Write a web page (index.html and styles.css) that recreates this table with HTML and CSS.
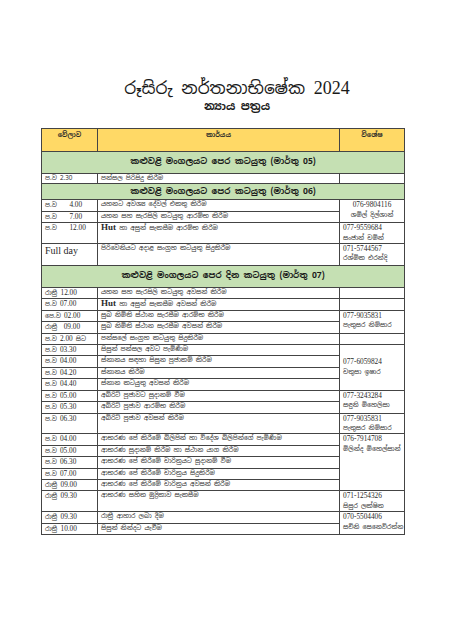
FILE: index.html
```html
<!DOCTYPE html>
<html lang="si">
<head>
<meta charset="utf-8">
<title>රූසිරු නර්තනාභිෂේක 2024</title>
<link rel="stylesheet" href="styles.css">
</head>
<body>
<div class="page">
  <h1 class="title">රූසිරු නර්තනාභිෂේක <span class="num">2024</span></h1>
  <h2 class="subtitle">න්‍යාය පත්‍රය</h2>
  <table class="agenda">
    <colgroup><col class="c1"><col class="c2"><col class="c3"></colgroup>
    <thead>
      <tr class="head"><th>වේලාව</th><th>කාර්යය</th><th>විශේෂ</th></tr>
    </thead>
    <tbody>
      <tr class="sec tall"><td colspan="3">කළුවළි මංගලයට පෙර කටයුතු (මාර්තු 05)</td></tr>
      <tr><td>ප.ව 2.30</td><td>පන්සල පිරිසිදු කිරීම</td><td></td></tr>
      <tr class="sec short"><td colspan="3">කළුවළි මංගලයට පෙර කටයුතු (මාර්තු 06)</td></tr>
      <tr><td class="pre">ප.ව    <span class="num">4.00</span></td><td>යහනට අවශ්‍ය දේවල් එකතු කිරීම</td><td rowspan="2" class="center"><span class="num">076-9804116</span><br>ශමිල් දිල්ශාන්</td></tr>
      <tr><td class="pre">ප.ව    <span class="num">7.00</span></td><td>යහන සහ සැරසිලි කටයුතු ආරම්භ කිරීම</td></tr>
      <tr class="two"><td class="pre">ප.ව    <span class="num">12.00</span></td><td><span class="big">Hut</span> හා අසුන් සැකසීම ආරම්භ කිරීම</td><td><span class="num">077-9559684</span><br>සංජාන් චමින්</td></tr>
      <tr class="two fd"><td><span class="fullday">Full day</span></td><td>පිරිවෙනියට අදාළ සංග්‍රහ කටයුතු සිදුකිරීම</td><td><span class="num">071-5744567</span><br>රශ්මික එරන්දි</td></tr>
      <tr class="sec tall"><td colspan="3">කළුවළි මංගලයට පෙර දින කටයුතු (මාර්තු 07)</td></tr>
      <tr><td>රාත්‍රී <span class="num">12.00</span></td><td>යහන සහ සැරසිලි කටයුතු අවසන් කිරීම</td><td></td></tr>
      <tr><td>ප.ව <span class="num">07.00</span></td><td><span class="big">Hut</span> හා අසුන් සැකසීම අවසන් කිරීම</td><td></td></tr>
      <tr><td>පෙ.ව <span class="num">02.00</span></td><td>සුබ නිමිති ස්ථාන සැරසීම ආරම්භ කිරීම</td><td rowspan="2"><span class="num">077-9035831</span><br>පැතුසර නිම්සාර</td></tr>
      <tr><td class="pre">රාත්‍රී  <span class="num">09.00</span></td><td>සුබ නිමිති ස්ථාන සැරසීම අවසන් කිරීම</td></tr>
      <tr><td>ප.ව <span class="num">2.00</span> සිට</td><td>පන්සලේ සංග්‍රහ කටයුතු සිදුකිරීම</td><td></td></tr>
      <tr><td>ප.ව <span class="num">03.30</span></td><td>සිසුන් පන්සල අවට පැමිණීම</td><td rowspan="4" class="mid"><span class="num">077-6059824</span><br>චතුසා ඉෂාර</td></tr>
      <tr><td>ප.ව <span class="num">04.00</span></td><td>ස්නානය සඳහා සිසුන පූජාකම් කිරීම</td></tr>
      <tr><td>ප.ව <span class="num">04.20</span></td><td>ස්නානය කිරීම</td></tr>
      <tr><td>ප.ව <span class="num">04.40</span></td><td>ස්නාන කටයුතු අවසන් කිරීම</td></tr>
      <tr><td>ප.ව <span class="num">05.00</span></td><td>අබිරිට් පූජාවට සූදානම් වීම</td><td rowspan="2"><span class="num">077-3243284</span><br>සඳුනි මිහෙලිසා</td></tr>
      <tr><td>ප.ව <span class="num">05.30</span></td><td>අබිරිට් පූජාව ආරම්භ කිරීම</td></tr>
      <tr class="two"><td>ප.ව <span class="num">06.30</span></td><td>අබිරිට් පූජාව අවසන් කිරීම</td><td><span class="num">077-9035831</span><br>පැතුසර නිම්සාර</td></tr>
      <tr class="thick"><td>ප.ව <span class="num">04.00</span></td><td>ආභරණ පේ කිරීමේ බිලිපින් හා විදේශ බිලිපින්ගේ පැමිණීම</td><td rowspan="5"><span class="num">076-7914708</span><br>මිලින්ද මිහෙල්සාන්</td></tr>
      <tr><td>ප.ව <span class="num">05.00</span></td><td>ආභරණ සූදානම් කිරීම හා ස්ථාන යාග කිරීම</td></tr>
      <tr><td>ප.ව <span class="num">06.30</span></td><td>ආභරණ පේ කිරීමේ චාරිත්‍රයට සූදානම් වීම</td></tr>
      <tr><td>ප.ව <span class="num">07.00</span></td><td>ආභරණ පේ කිරීමේ චාරිත්‍රය සිදුකිරීම</td></tr>
      <tr><td>රාත්‍රී <span class="num">09.00</span></td><td>ආභරණ පේ කිරීමේ චාරිත්‍රය අවසන් කිරීම</td></tr>
      <tr class="two"><td>රාත්‍රී <span class="num">09.30</span></td><td>ආභරණ සහිත මුද්‍රිකාව සැකසීම</td><td><span class="num">071-1254326</span><br>සිසුර ලක්ෂිත</td></tr>
      <tr><td>රාත්‍රී <span class="num">09.30</span></td><td>රාත්‍රී ආහාර ලබා දීම</td><td rowspan="2"><span class="num">070-5504406</span><br>සචිනි සෙනෙවිරත්න</td></tr>
      <tr><td>රාත්‍රී <span class="num">10.00</span></td><td>සිසුන් නින්දට යැවීම</td></tr>
    </tbody>
  </table>
</div>
</body>
</html>
```
FILE: styles.css
```css
html, body {
  margin: 0;
  padding: 0;
  background: #ffffff;
}
.page {
  width: 474px;
  height: 632px;
  padding-top: 78px;
  box-sizing: border-box;
  font-family: "Noto Sans Sinhala", "Iskoola Pota", "Liberation Sans", sans-serif;
  color: #1a1a1a;
}
.title {
  margin: 0;
  text-align: center;
  font-weight: normal;
  font-size: 17px;
  line-height: 20px;
}
.title .num {
  font-family: "Liberation Serif", serif;
  font-size: 18px;
}
.subtitle {
  margin: 0;
  text-align: center;
  font-size: 11px;
  line-height: 16px;
  font-weight: bold;
}
.agenda {
  margin: 14px 0 0 41px;
  width: 363px;
  border-collapse: collapse;
  table-layout: fixed;
  font-size: 6.3px;
  line-height: 9.4px;
  color: #2a2a2a;
}
.c1 { width: 56px; }
.c2 { width: 242px; }
.c3 { width: 65px; }
.agenda th, .agenda td {
  border: 0.8px solid #444;
  padding: 0 3px;
  vertical-align: top;
  white-space: nowrap;
  overflow: hidden;
}
.agenda tr.head th {
  background: #ffd966;
  height: 21px;
  padding-top: 1px;
  font-weight: bold;
  text-align: center;
  font-size: 6.5px;
}
.agenda tr.sec td {
  background: #c5e0b3;
  text-align: center;
  font-weight: bold;
  font-size: 8.5px;
  line-height: 14px;
  padding-top: 2px;
  color: #1a1a1a;
}
.agenda tr.sec.tall td { height: 19px; }
.agenda tr.sec.short td { height: 15px; padding-top: 0; }
.agenda tr td { height: 9.4px; }
.agenda tr.two td { height: 18.8px; }
.agenda tr.fd td { height: 21px; }
.agenda tr.thick td { border-top: 1.6px solid #222; }
.agenda td.pre { white-space: pre; }
.agenda td.center { text-align: center; }
.agenda td.mid { vertical-align: middle; }
.num {
  font-family: "Liberation Serif", serif;
  font-size: 7.3px;
}
.big {
  font-family: "Liberation Serif", serif;
  font-size: 9px;
  font-weight: bold;
}
.fullday {
  font-family: "Liberation Serif", serif;
  font-size: 10px;
  line-height: 14px;
}
```
